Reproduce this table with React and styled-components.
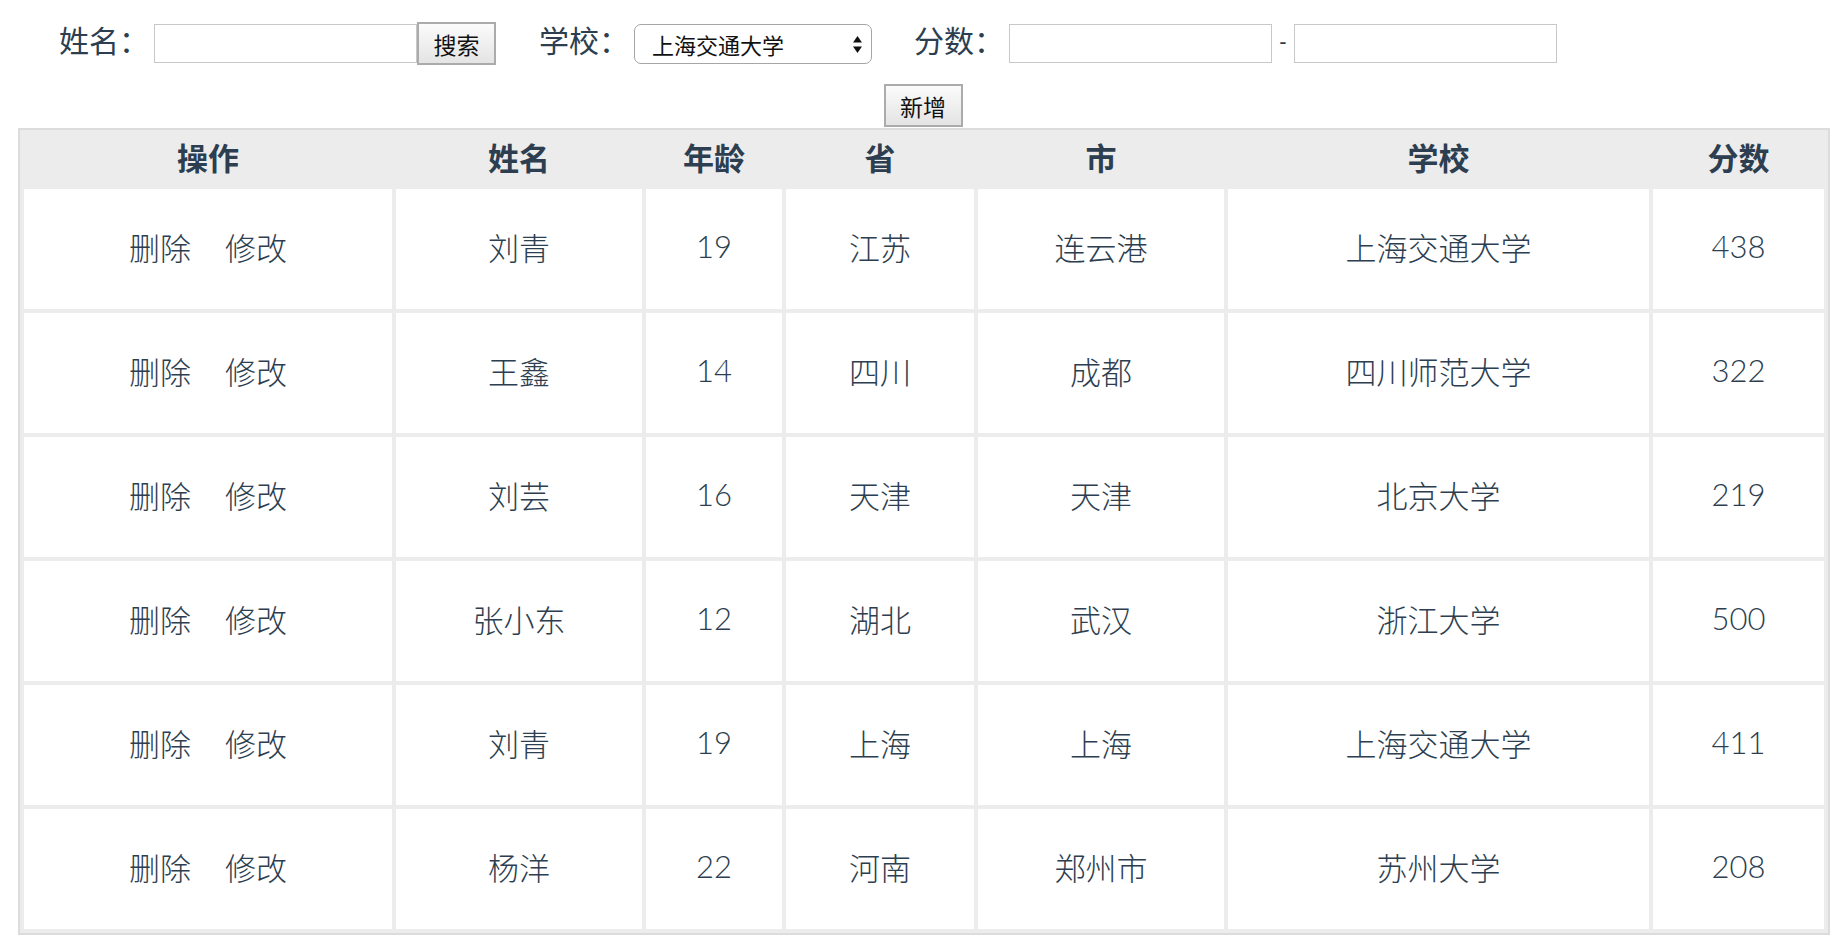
import React from 'react';
import styled, { createGlobalStyle } from 'styled-components';

const GlobalStyle = createGlobalStyle`
  body {
    margin: 8px;
    background: #fff;
    font-family: Lato, "Noto Sans CJK SC", sans-serif;
    color: #2c3e50;
  }
`;

const students = [
  { name: '刘青', age: 19, province: '江苏', city: '连云港', school: '上海交通大学', score: 438 },
  { name: '王鑫', age: 14, province: '四川', city: '成都', school: '四川师范大学', score: 322 },
  { name: '刘芸', age: 16, province: '天津', city: '天津', school: '北京大学', score: 219 },
  { name: '张小东', age: 12, province: '湖北', city: '武汉', school: '浙江大学', score: 500 },
  { name: '刘青', age: 19, province: '上海', city: '上海', school: '上海交通大学', score: 411 },
  { name: '杨洋', age: 22, province: '河南', city: '郑州市', school: '苏州大学', score: 208 },
];

const columns = [
  { title: '操作', width: 368 },
  { title: '姓名', width: 246 },
  { title: '年龄', width: 136 },
  { title: '省', width: 188 },
  { title: '市', width: 246 },
  { title: '学校', width: 421 },
  { title: '分数', width: 171 },
];

export default function App() {
  return (
    <Page>
      <GlobalStyle />
      <Toolbar>
        <Label>姓名：</Label>
        <TextInput type="text" />
        <Button>搜索</Button>

        <Label $gap={43}>学校：</Label>
        <SelectWrap>
          <Select defaultValue="上海交通大学">
            <option>上海交通大学</option>
            <option>四川师范大学</option>
            <option>北京大学</option>
            <option>浙江大学</option>
            <option>苏州大学</option>
          </Select>
          <Arrows width="11" height="19" viewBox="0 0 11 19">
            <path d="M5.5 1 L10 7.5 L1 7.5 Z" fill="#111" />
            <path d="M5.5 18 L10 11.5 L1 11.5 Z" fill="#111" />
          </Arrows>
        </SelectWrap>

        <Label $gap={42}>分数：</Label>
        <TextInput type="text" />
        <Dash>-</Dash>
        <TextInput type="text" />
      </Toolbar>

      <AddRow>
        <Button>新增</Button>
      </AddRow>

      <Table>
        <colgroup>
          {columns.map((c) => (
            <col key={c.title} style={{ width: c.width }} />
          ))}
        </colgroup>
        <thead>
          <tr>
            {columns.map((c) => (
              <Th key={c.title}>{c.title}</Th>
            ))}
          </tr>
        </thead>
        <tbody>
          {students.map((s, i) => (
            <tr key={i}>
              <Td>
                <Action>删除</Action>
                <Action>修改</Action>
              </Td>
              <Td>{s.name}</Td>
              <Td>{s.age}</Td>
              <Td>{s.province}</Td>
              <Td>{s.city}</Td>
              <Td>{s.school}</Td>
              <Td>{s.score}</Td>
            </tr>
          ))}
        </tbody>
      </Table>
    </Page>
  );
}

const Page = styled.div`
  display: flex;
  flex-direction: column;
`;

const Toolbar = styled.div`
  display: flex;
  align-items: center;
  padding: 14px 0 0 51px;
  height: 43px;
`;

const Label = styled.span`
  display: inline-block;
  padding-bottom: 9px;
  font-family: "Noto Sans CJK SC", sans-serif;
  font-size: 30px;
  line-height: 1;
  color: #2c3e50;
  margin-left: ${(p) => p.$gap || 0}px;
  margin-right: 5px;
  white-space: nowrap;
`;

const TextInput = styled.input`
  box-sizing: border-box;
  width: 263px;
  height: 39px;
  border: 1px solid #c8c8c8;
  border-radius: 0;
  padding: 0 6px;
  font-size: 20px;
  outline: none;
`;

const Dash = styled.span`
  font-family: "Liberation Sans", sans-serif;
  font-size: 22px;
  color: #2c3e50;
  width: 22px;
  text-align: center;
  padding-bottom: 4px;
`;

const Button = styled.button`
  box-sizing: border-box;
  height: 43px;
  width: 79px;
  padding: 0;
  border: 2px solid #ababab;
  border-radius: 0;
  background: linear-gradient(#fbfbfb, #e4e4e4);
  font-family: "Noto Sans CJK SC", sans-serif;
  font-size: 23px;
  color: #111;
  cursor: pointer;
`;

const SelectWrap = styled.div`
  position: relative;
  display: flex;
`;

const Select = styled.select`
  appearance: none;
  -webkit-appearance: none;
  box-sizing: border-box;
  width: 238px;
  height: 40px;
  padding: 0 30px 0 17px;
  border: 1px solid #a6a6a6;
  border-radius: 7px;
  background: #fff;
  font-family: "Noto Sans CJK SC", sans-serif;
  font-size: 22px;
  color: #111;
  outline: none;
`;

const Arrows = styled.svg`
  position: absolute;
  right: 9px;
  top: 11px;
  pointer-events: none;
`;

const AddRow = styled.div`
  display: flex;
  justify-content: center;
  margin-top: 19px;
  padding-left: 2px;
`;

const Table = styled.table`
  table-layout: fixed;
  width: 1812px;
  margin: 1px 0 0 10px;
  border: 2px solid #dcdcdc;
  border-collapse: separate;
  border-spacing: 4px;
  background: #ececec;
  font-size: 31px;
  color: #2c3e50;
`;

const Th = styled.th`
  height: 44px;
  padding: 0 0 6px;
  font-weight: 700;
  text-align: center;
  background: #ececec;
`;

const Td = styled.td`
  height: 114px;
  padding: 0 0 6px;
  text-align: center;
  background: #fff;
  font-weight: 300;
`;

const Action = styled.span`
  cursor: pointer;
  & + & {
    margin-left: 34px;
  }
`;
